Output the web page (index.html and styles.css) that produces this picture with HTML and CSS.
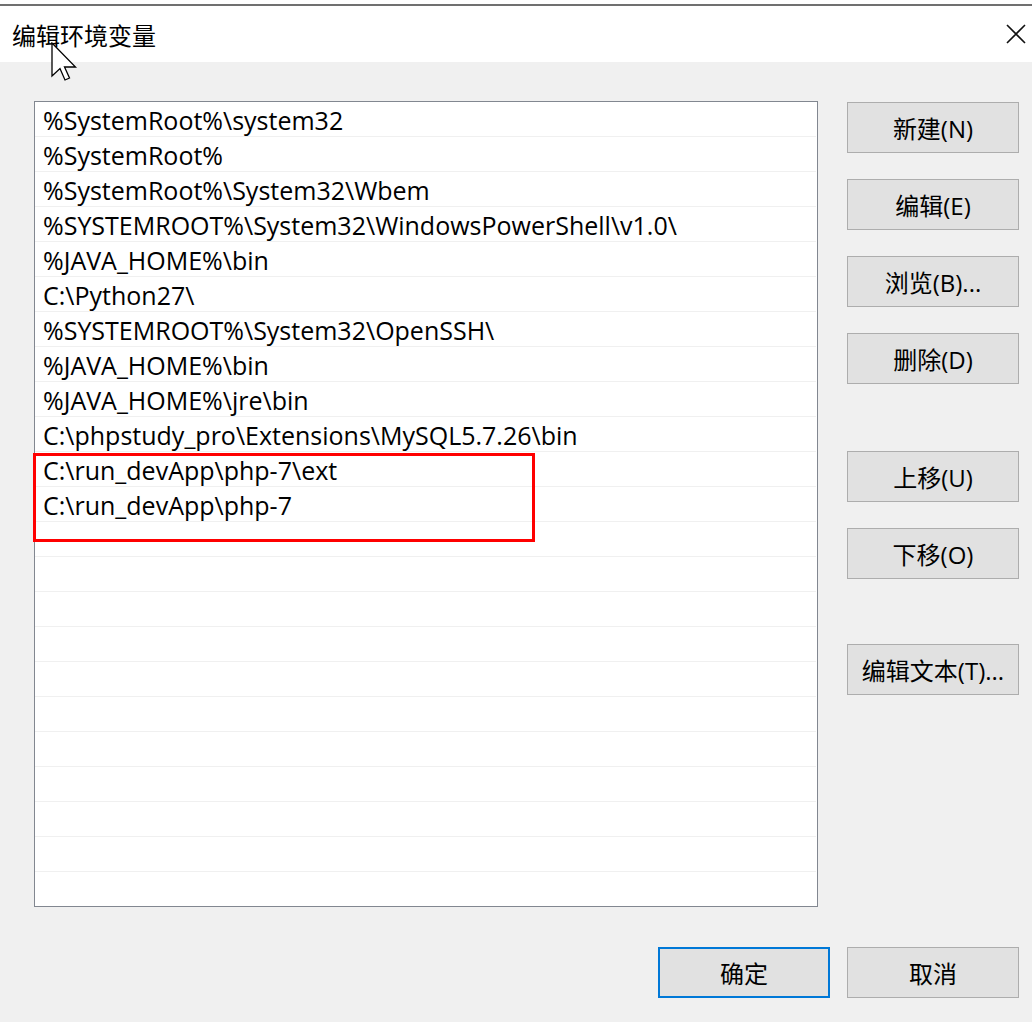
FILE: index.html
```html
<!DOCTYPE html>
<html lang="zh-CN">
<head>
    <meta charset="UTF-8">
    <title>编辑环境变量</title>
    <link rel="stylesheet" href="styles.css">
</head>
<body>
    <div class="window">
        <div class="edge"></div>
        <div class="titlebar">
            <span class="title">编辑环境变量</span>
            <button class="close" title="关闭">
                <svg width="20" height="20" viewBox="0 0 20 20"><path d="M1 1 L19 19 M19 1 L1 19" stroke="#111" stroke-width="1.6" fill="none"/></svg>
            </button>
        </div>
        <div class="content">
            <div class="main">
                <div class="pathlist">
                    <div class="rows">
                        <div class="item">%SystemRoot%\system32</div>
                        <div class="item">%SystemRoot%</div>
                        <div class="item">%SystemRoot%\System32\Wbem</div>
                        <div class="item">%SYSTEMROOT%\System32\WindowsPowerShell\v1.0\</div>
                        <div class="item">%JAVA_HOME%\bin</div>
                        <div class="item">C:\Python27\</div>
                        <div class="item">%SYSTEMROOT%\System32\OpenSSH\</div>
                        <div class="item">%JAVA_HOME%\bin</div>
                        <div class="item">%JAVA_HOME%\jre\bin</div>
                        <div class="item">C:\phpstudy_pro\Extensions\MySQL5.7.26\bin</div>
                        <div class="item">C:\run_devApp\php-7\ext</div>
                        <div class="item">C:\run_devApp\php-7</div>
                        <div class="item"></div>
                        <div class="item"></div>
                        <div class="item"></div>
                        <div class="item"></div>
                        <div class="item"></div>
                        <div class="item"></div>
                        <div class="item"></div>
                        <div class="item"></div>
                        <div class="item"></div>
                        <div class="item"></div>
                        <div class="item"></div>
                    </div>
                    <div class="highlight"></div>
                </div>
                <div class="actions">
                    <div class="group">
                        <button class="btn">新建(N)</button>
                        <button class="btn">编辑(E)</button>
                        <button class="btn">浏览(B)...</button>
                        <button class="btn">删除(D)</button>
                    </div>
                    <div class="group move">
                        <button class="btn">上移(U)</button>
                        <button class="btn">下移(O)</button>
                    </div>
                    <div class="group text">
                        <button class="btn">编辑文本(T)...</button>
                    </div>
                </div>
            </div>
            <div class="footer">
                <button class="btn default">确定</button>
                <button class="btn">取消</button>
            </div>
        </div>
        <svg class="cursor" width="27" height="40" viewBox="0 0 27 40">
            <path d="M1 1 L1 34 L9 26.5 L14 38 L18.5 36 L13.5 25 L24.5 25 Z" fill="#fff" stroke="#000" stroke-width="1.3" stroke-linejoin="miter"/>
        </svg>
    </div>
</body>
</html>
```

FILE: styles.css
```css
body {
    margin: 0;
    background-color: #f0f0f0;
    font-family: "Open Sans", "Noto Sans CJK SC", sans-serif;
    color: #000;
}
.window {
    position: relative;
    width: 1032px;
    height: 1022px;
    background: #f0f0f0;
    overflow: hidden;
}
.edge {
    height: 4px;
    background: #fff;
    border-bottom: 2px solid #707070;
}
.titlebar {
    height: 56px;
    background: #fff;
    display: flex;
    align-items: center;
    justify-content: space-between;
    padding: 0 6px 0 12px;
}
.title {
    font-family: "Noto Sans CJK SC", sans-serif;
    font-size: 24px;
    line-height: 1;
    margin-top: 1px;
}
.close {
    width: 20px;
    height: 20px;
    padding: 0;
    border: none;
    background: none;
    display: flex;
}
.content {
    padding: 39px 13px 0 34px;
}
.main {
    display: flex;
    gap: 29px;
}
.pathlist {
    position: relative;
    width: 782px;
    height: 804px;
    background: #fff;
    border: 1px solid #828790;
}
.rows {
    height: 804px;
    overflow: hidden;
}
.item {
    height: 33px;
    padding-top: 1px;
    line-height: 34px;
    border-bottom: 1px solid #f0f0f0;
    margin-right: 1px;
    padding-left: 8px;
    font-size: 25px;
    white-space: nowrap;
}
.highlight {
    position: absolute;
    left: -2px;
    top: 351px;
    width: 502px;
    height: 89px;
    box-sizing: border-box;
    border: 3px solid #f00;
}
.actions {
    width: 172px;
    padding-top: 1px;
}
.group {
    display: flex;
    flex-direction: column;
    gap: 26px;
}
.move {
    margin-top: 67px;
}
.text {
    margin-top: 65px;
}
.btn {
    width: 172px;
    height: 51px;
    box-sizing: border-box;
    background: #e1e1e1;
    border: 1px solid #adadad;
    font-family: "Open Sans", "Noto Sans CJK SC", sans-serif;
    font-size: 24px;
    color: #000;
    padding: 0;
}
.footer {
    display: flex;
    justify-content: flex-end;
    gap: 17px;
    margin-top: 40px;
}
.default {
    border: 2px solid #0078d7;
}
.cursor {
    position: absolute;
    left: 51px;
    top: 42px;
}
```
